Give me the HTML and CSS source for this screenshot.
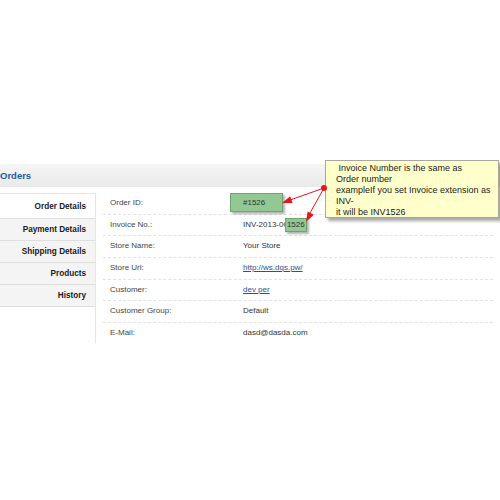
FILE: index.html
```html
<!DOCTYPE html>
<html lang="en">
<head>
<meta charset="UTF-8" />
<title>Orders</title>
<link rel="stylesheet" href="styles.css">
</head>
<body>
<div class="page">
    <div class="heading">Orders</div>
    <div class="content">
        <div class="tabs">
            <a class="active" href="#">Order Details</a>
            <a href="#">Payment Details</a>
            <a href="#">Shipping Details</a>
            <a href="#">Products</a>
            <a href="#">History</a>
        </div>
        <div class="details">
            <div class="row"><span class="label">Order ID:</span><span class="value"><span class="mark-big">#1526</span></span></div>
            <div class="row"><span class="label">Invoice No.:</span><span class="value">INV-2013-00<span class="mark">1526</span></span></div>
            <div class="row"><span class="label">Store Name:</span><span class="value">Your Store</span></div>
            <div class="row"><span class="label">Store Url:</span><span class="value"><a href="#">http://ws.dqs.pw/</a></span></div>
            <div class="row"><span class="label">Customer:</span><span class="value"><a href="#">dev per</a></span></div>
            <div class="row"><span class="label">Customer Group:</span><span class="value">Default</span></div>
            <div class="row last"><span class="label">E-Mail:</span><span class="value">dasd@dasda.com</span></div>
        </div>
    </div>
</div>

<!-- annotation callout -->
<svg class="arrows" width="500" height="500" viewBox="0 0 500 500">
    <line x1="324" y1="188" x2="290" y2="200" stroke="#e8141c" stroke-width="1" />
    <line x1="324" y1="188" x2="310" y2="213" stroke="#e8141c" stroke-width="1" />
    <polygon points="282,203 292.6,202.9 290.2,196.3" fill="#e8141c" />
    <polygon points="306,222 313.8,214.8 307.6,211.5" fill="#e8141c" />
</svg>
<div class="note">&nbsp;Invoice Number is the same as<br>Order number<br>exampleIf you set Invoice extension as<br>INV-<br>it will be INV1526</div>
<div class="dot"></div>
</body>
</html>
```

FILE: styles.css
```css
body {
    margin: 0;
    font-family: "Liberation Sans", Arial, sans-serif;
    background: #fff;
    color: #333;
}

.page {
    padding-top: 164px;
}

.heading {
    height: 23px;
    line-height: 23px;
    background: linear-gradient(#f6f6f6, #e9e9e9);
    color: #1d5c9f;
    font-weight: bold;
    font-size: 9.5px;
}

.content {
    display: flex;
    margin-top: 6px;
}

/* left tabs */
.tabs {
    width: 95px;
    height: 150px;
    border-right: 1px solid #e6e6e6;
}

.tabs a {
    display: block;
    height: 21px;
    line-height: 21px;
    text-align: right;
    padding-right: 9px;
    background: #f4f4f4;
    border-bottom: 1px solid #dedede;
    color: #1a1a1a;
    font-weight: bold;
    font-size: 8.2px;
    text-decoration: none;
}

.tabs a.active {
    height: 24px;
    line-height: 26px;
    background: #fff;
    border-top: 1px solid #e6e6e6;
    border-bottom: 1px solid #e0e0e0;
}

/* detail rows */
.details {
    flex: 1;
    padding-left: 7px;
    padding-right: 7px;
}

.row {
    display: grid;
    grid-template-columns: 133px 1fr;
    height: 20.7px;
    line-height: 20.7px;
    border-bottom: 1px dashed #e2e2e2;
    font-size: 8px;
    padding-left: 7px;
    color: #444;
}

.row.last {
    border-bottom: none;
}

.value {
    color: #333;
}

.value a {
    color: #2b4f9c;
}

.mark-big {
    display: inline-block;
    margin-left: -13px;
    padding: 0 17px 0 12px;
    height: 17px;
    line-height: 17px;
    background: #92c992;
    border: 1px solid #6fa46f;
    box-shadow: 2px 2px 2px rgba(0, 0, 0, 0.3);
}

.mark {
    display: inline-block;
    height: 12px;
    line-height: 12px;
    padding: 0 1px;
    margin-left: -3px;
    background: #92c992;
    border: 1px solid #6fa46f;
    box-shadow: 2px 2px 2px rgba(0, 0, 0, 0.3);
}

/* yellow callout */
.note {
    position: absolute;
    left: 325px;
    top: 160px;
    width: 162px;
    height: 54px;
    padding: 2px 0 0 10px;
    background: #ffffcc;
    border: 1px solid #a8a8a0;
    box-shadow: 3px 3px 3px rgba(0, 0, 0, 0.35);
    font-size: 9px;
    line-height: 11px;
    color: #222;
}

.arrows {
    position: absolute;
    left: 0;
    top: 0;
    pointer-events: none;
}

.dot {
    position: absolute;
    left: 321px;
    top: 185px;
    width: 6px;
    height: 6px;
    border-radius: 50%;
    background: #e8141c;
}
```
